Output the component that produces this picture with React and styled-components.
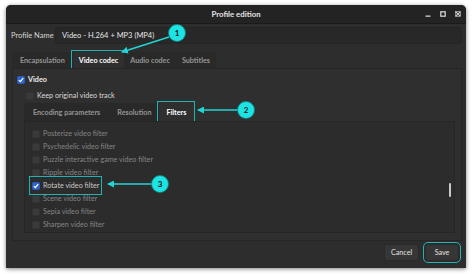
import React from "react";
import styled, { createGlobalStyle } from "styled-components";

const GlobalStyle = createGlobalStyle`
  html, body {
    margin: 0;
    background: #ffffff;
  }
  body {
    font-family: Lato, "Noto Sans", sans-serif;
    font-size: 7.2px;
  }
`;

const Page = styled.div`
  position: relative;
  width: 474px;
  height: 274px;
  padding: 5px 8px 6px 6px;
  box-sizing: border-box;
`;

const Window = styled.div`
  height: 263px;
  background: #2d2d2d;
  border-radius: 5px 5px 0 0;
  box-shadow: 0 1px 4px rgba(0, 0, 0, 0.5);
  display: flex;
  flex-direction: column;
  overflow: hidden;
`;

const TitleBar = styled.div`
  height: 18px;
  flex-shrink: 0;
  background: #232323;
  border-bottom: 1px solid #1a1a1a;
  display: grid;
  grid-template-columns: 1fr auto 1fr;
  align-items: center;
`;

const Title = styled.div`
  grid-column: 2;
  color: #e4e4e4;
  font-weight: 700;
  font-size: 7.8px;
`;

const Controls = styled.div`
  justify-self: end;
  display: flex;
  align-items: center;
  gap: 9px;
  padding-right: 5px;
`;

const Body = styled.div`
  flex: 1;
  display: flex;
  flex-direction: column;
  padding: 0 4px 0 5px;
`;

const ProfileRow = styled.div`
  display: flex;
  align-items: center;
  margin-top: 3px;
  height: 17px;
`;

const Label = styled.div`
  width: 44px;
  white-space: nowrap;
  color: #d6d6d6;
  font-size: 7.5px;
`;

const Input = styled.div`
  flex: 1;
  height: 17px;
  box-sizing: border-box;
  background: #282828;
  border: 1px solid #242424;
  border-radius: 3px;
  padding-left: 6px;
  display: flex;
  align-items: center;
  color: #e6e6e6;
  font-size: 7.5px;
`;

const TabWidget = styled.div`
  display: flex;
  flex-direction: column;
  margin: ${(p) => p.$margin};
`;

const TabBar = styled.div`
  display: flex;
  height: ${(p) => p.$height}px;
`;

const Tab = styled.div`
  display: flex;
  align-items: center;
  white-space: nowrap;
  padding: 0 ${(p) => p.$pad}px;
  background: ${(p) => (p.$active ? "#2f2f2f" : "#292929")};
  color: ${(p) => (p.$active ? "#ffffff" : "#959595")};
  font-weight: 700;
  outline: ${(p) => (p.$mark ? "1.5px solid #20b3b3" : "none")};
  outline-offset: 1px;
`;

const Panel = styled.div`
  background: #2f2f2f;
  border: 1px solid #262626;
  height: 173px;
  box-sizing: border-box;
  padding: 4px 0 0 4px;
  display: flex;
  flex-direction: column;
`;

const CheckRow = styled.div`
  display: flex;
  align-items: center;
  gap: 3px;
  height: 13px;
  margin-top: ${(p) => p.$top || 0}px;
  margin-left: ${(p) => p.$indent || 0}px;
  color: ${(p) => p.$color || "#dcdcdc"};
  font-weight: ${(p) => (p.$bold ? 700 : 400)};
`;

const Box = styled.span`
  width: 8px;
  height: 8px;
  flex-shrink: 0;
  box-sizing: border-box;
  border-radius: 1.5px;
  background: ${(p) => (p.$checked ? "#2d64cc" : "#3a3a3a")};
  border: 1px solid ${(p) => (p.$checked ? "#2a5ab8" : "#333333")};
  display: flex;
  align-items: center;
  justify-content: center;
`;

const ListPanel = styled.div`
  height: 112px;
  box-sizing: border-box;
  background: #2c2c2c;
  border: 1px solid #262626;
  display: flex;
`;

const List = styled.div`
  flex: 1;
  padding: 5px 0 0 7px;
  display: flex;
  flex-direction: column;
`;

const Item = styled.div`
  align-self: flex-start;
  display: flex;
  align-items: center;
  gap: 3px;
  height: 13px;
  white-space: nowrap;
  color: ${(p) => (p.$checked ? "#c8c8c8" : "#858585")};
  outline: ${(p) => (p.$mark ? "1.5px solid #20b3b3" : "none")};
  outline-offset: 2px;
`;

const Track = styled.div`
  width: 2px;
  margin-right: 3px;
  padding-top: 61px;
`;

const Thumb = styled.div`
  height: 14px;
  background: #c9c9c9;
  border-radius: 1px;
`;

const Footer = styled.div`
  flex: 1;
  display: flex;
  justify-content: flex-end;
  align-items: flex-start;
  gap: 6px;
  padding: 3px 3px 0 0;
`;

const Button = styled.div`
  width: ${(p) => p.$w}px;
  height: 17px;
  box-sizing: border-box;
  background: #363636;
  border: 1px solid #2a2a2a;
  border-radius: 3px;
  color: #e2e2e2;
  display: flex;
  align-items: center;
  justify-content: center;
  outline: ${(p) => (p.$mark ? "1.5px solid #20b3b3" : "none")};
  outline-offset: 1px;
`;

const Overlay = styled.svg`
  position: absolute;
  left: 0;
  top: 0;
  pointer-events: none;
`;

const Check = () => (
  <svg width="6" height="6" viewBox="0 0 6 6">
    <path d="M0.8 3.1 L2.4 4.6 L5.2 1.2" fill="none" stroke="#fff" strokeWidth="1.3" />
  </svg>
);

const filters = [
  "Posterize video filter",
  "Psychedelic video filter",
  "Puzzle interactive game video filter",
  "Ripple video filter",
  "Rotate video filter",
  "Scene video filter",
  "Sepia video filter",
  "Sharpen video filter",
];

const Callout = ({ cx, cy, n }) => (
  <g>
    <circle cx={cx} cy={cy} r="8.5" fill="#1ee3e3" stroke="#127f80" strokeWidth="0.8" />
    <text
      x={cx}
      y={cy + 3}
      textAnchor="middle"
      fontSize="8"
      fontWeight="700"
      fontFamily="Lato, sans-serif"
      fill="#111"
    >
      {n}
    </text>
  </g>
);

const App = () => {
  return (
    <Page>
      <GlobalStyle />
      <Window>
        <TitleBar>
          <Title>Profile edition</Title>
          <Controls>
            <svg width="6" height="6" viewBox="0 0 6 6">
              <rect x="0.5" y="4.5" width="5" height="1.3" fill="#d0d0d0" />
            </svg>
            <svg width="6" height="6" viewBox="0 0 6 6">
              <rect x="0.8" y="0.8" width="4.4" height="4.4" fill="none" stroke="#d0d0d0" strokeWidth="1.3" />
            </svg>
            <svg width="6" height="6" viewBox="0 0 6 6">
              <path d="M0.8 0.8 L5.2 5.2 M5.2 0.8 L0.8 5.2" stroke="#d0d0d0" strokeWidth="1.2" />
              <rect x="0.5" y="0.5" width="5" height="5" fill="none" stroke="#d0d0d0" strokeWidth="0.6" />
            </svg>
          </Controls>
        </TitleBar>
        <Body>
          <ProfileRow>
            <Label>Profile Name</Label>
            <Input>Video - H.264 + MP3 (MP4)</Input>
          </ProfileRow>
          <TabWidget $margin="8px 0 0 1px">
            <TabBar $height={16}>
              <Tab $pad={8}>Encapsulation</Tab>
              <Tab $pad={6} $active $mark>Video codec</Tab>
              <Tab $pad={6}>Audio codec</Tab>
              <Tab $pad={6}>Subtitles</Tab>
            </TabBar>
            <Panel>
              <CheckRow $bold $color="#ececec">
                <Box $checked><Check /></Box>
                Video
              </CheckRow>
              <CheckRow $indent={9} $top={3} $color="#d8d8d8">
                <Box />
                Keep original video track
              </CheckRow>
              <TabWidget $margin="1px 6px 0 7px">
                <TabBar $height={18}>
                  <Tab $pad={9}>Encoding parameters</Tab>
                  <Tab $pad={8}>Resolution</Tab>
                  <Tab $pad={7} $active $mark>Filters</Tab>
                </TabBar>
                <ListPanel>
                  <List>
                    {filters.map((f) => {
                      const on = f.startsWith("Rotate");
                      return (
                        <Item key={f} $checked={on} $mark={on}>
                          <Box $checked={on}>{on && <Check />}</Box>
                          {f}
                        </Item>
                      );
                    })}
                  </List>
                  <Track>
                    <Thumb />
                  </Track>
                </ListPanel>
              </TabWidget>
            </Panel>
          </TabWidget>
          <Footer>
            <Button $w={35}>Cancel</Button>
            <Button $w={34} $mark>Save</Button>
          </Footer>
        </Body>
      </Window>
      <Overlay width="474" height="274" viewBox="0 0 474 274">
        <defs>
          <marker
            id="head"
            markerWidth="7"
            markerHeight="7"
            refX="6"
            refY="3.5"
            orient="auto"
            markerUnits="userSpaceOnUse"
          >
            <path d="M0 0 L7 3.5 L0 7 Z" fill="#22d4d4" />
          </marker>
        </defs>
        <line x1="169" y1="37" x2="122" y2="52" stroke="#22d4d4" strokeWidth="1.5" markerEnd="url(#head)" />
        <line x1="238" y1="110" x2="198" y2="110" stroke="#22d4d4" strokeWidth="1.5" markerEnd="url(#head)" />
        <line x1="152" y1="184" x2="108" y2="184" stroke="#22d4d4" strokeWidth="1.5" markerEnd="url(#head)" />
        <Callout cx={177} cy={33} n="1" />
        <Callout cx={246} cy={110} n="2" />
        <Callout cx={160} cy={184} n="3" />
      </Overlay>
    </Page>
  );
};

export default App;
